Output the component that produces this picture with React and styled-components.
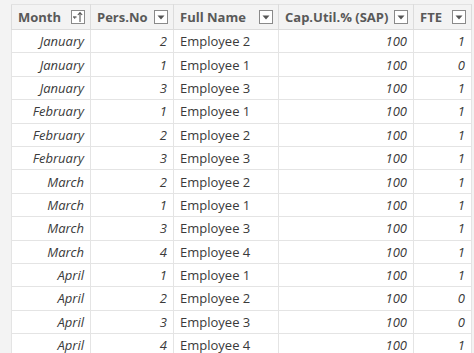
import styled, { createGlobalStyle } from "styled-components";

const GlobalStyle = createGlobalStyle`
  html, body {
    margin: 0;
    padding: 0;
    background: #f3f3f3;
    overflow: hidden;
  }
`;

const Page = styled.div`
  width: 474px;
  height: 353px;
  padding: 4px 0 0 11px;
  box-sizing: border-box;
  background: #f3f3f3;
  overflow: hidden;
  font-family: "Open Sans", "Noto Sans", sans-serif;
`;

const Table = styled.table`
  border-collapse: collapse;
  table-layout: fixed;
  width: 460px;
  background: #ffffff;
`;

const HeadCell = styled.th`
  height: 25px;
  padding: 0 5px 0 6px;
  background: #f3f3f3;
  border: 1px solid #dcdcdc;
  border-top-color: #e2e2e2;
  box-sizing: border-box;
  text-align: left;
  font-size: 13px;
  font-weight: 700;
  color: #595959;
  white-space: nowrap;
`;

const HeadInner = styled.div`
  display: flex;
  align-items: center;
  justify-content: space-between;
`;

const FilterBox = styled.span`
  display: flex;
  align-items: center;
  justify-content: center;
  width: 14px;
  height: 14px;
  border: 1px solid #8a8a8a;
  background: #ffffff;
  box-sizing: border-box;
`;

const Cell = styled.td`
  height: 23.4px;
  padding: 0 6px;
  border: 1px solid #e4e4e4;
  box-sizing: border-box;
  font-size: 13px;
  color: #3a3a3a;
  white-space: nowrap;
  overflow: hidden;
  text-align: ${(p) => (p.$text ? "left" : "right")};
  font-style: ${(p) => (p.$text ? "normal" : "italic")};
`;

const Caret = () => (
  <svg width="8" height="5" viewBox="0 0 8 5">
    <path d="M0.5 0.5 L7.5 0.5 L4 4.5 Z" fill="#555" />
  </svg>
);

const SortIcon = () => (
  <svg width="12" height="12" viewBox="0 0 12 12">
    <path d="M1 6 H4.5" stroke="#555" strokeWidth="1.3" />
    <path d="M2.7 6 L2.7 7.8" stroke="#555" strokeWidth="1" />
    <path d="M8 11 V1.8 M5.8 4 L8 1.6 L10.2 4" stroke="#555" strokeWidth="1.1" fill="none" />
  </svg>
);

const columns = [
  { label: "Month", width: 79, sort: true },
  { label: "Pers.No", width: 83 },
  { label: "Full Name", width: 105 },
  { label: "Cap.Util.% (SAP)", width: 135 },
  { label: "FTE", width: 58 },
];

const rows = [
  ["January", 2, 2, 1],
  ["January", 1, 1, 0],
  ["January", 3, 3, 1],
  ["February", 1, 1, 1],
  ["February", 2, 2, 1],
  ["February", 3, 3, 1],
  ["March", 2, 2, 1],
  ["March", 1, 1, 1],
  ["March", 3, 3, 1],
  ["March", 4, 4, 1],
  ["April", 1, 1, 1],
  ["April", 2, 2, 0],
  ["April", 3, 3, 0],
  ["April", 4, 4, 1],
];

export default function App() {
  return (
    <Page>
      <GlobalStyle />
      <Table>
        <colgroup>
          {columns.map((c) => (
            <col key={c.label} style={{ width: c.width }} />
          ))}
        </colgroup>
        <thead>
          <tr>
            {columns.map((c) => (
              <HeadCell key={c.label}>
                <HeadInner>
                  <span>{c.label}</span>
                  <FilterBox>{c.sort ? <SortIcon /> : <Caret />}</FilterBox>
                </HeadInner>
              </HeadCell>
            ))}
          </tr>
        </thead>
        <tbody>
          {rows.map(([month, no, emp, fte], i) => (
            <tr key={i}>
              <Cell>{month}</Cell>
              <Cell>{no}</Cell>
              <Cell $text>Employee {emp}</Cell>
              <Cell>100</Cell>
              <Cell>{fte}</Cell>
            </tr>
          ))}
        </tbody>
      </Table>
    </Page>
  );
}
